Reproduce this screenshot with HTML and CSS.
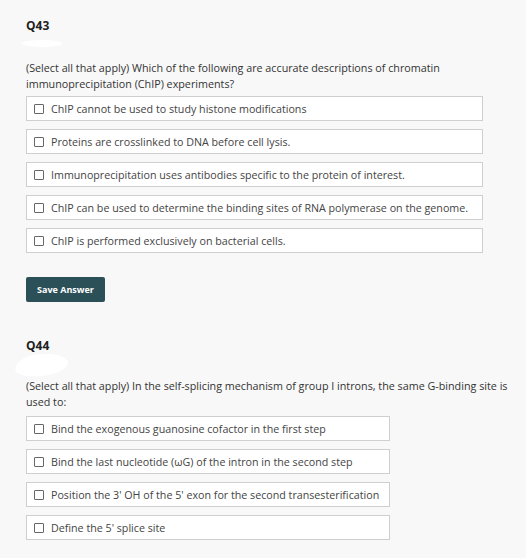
FILE: index.html
```html
<!DOCTYPE html>
<html>
<head>
<meta charset="utf-8">
<link rel="stylesheet" href="styles.css">
</head>
<body>
<div class="page">
  <section class="question q1">
    <h2 class="qnum">Q43</h2>
    <div class="blob blob-a"></div>
    <p class="prompt">(Select all that apply) Which of the following are accurate descriptions of chromatin immunoprecipitation (ChIP) experiments?</p>
    <div class="options wide">
      <label class="option"><span class="box"></span><span>ChIP cannot be used to study histone modifications</span></label>
      <label class="option"><span class="box"></span><span>Proteins are crosslinked to DNA before cell lysis.</span></label>
      <label class="option"><span class="box"></span><span>Immunoprecipitation uses antibodies specific to the protein of interest.</span></label>
      <label class="option"><span class="box"></span><span>ChIP can be used to determine the binding sites of RNA polymerase on the genome.</span></label>
      <label class="option"><span class="box"></span><span>ChIP is performed exclusively on bacterial cells.</span></label>
    </div>
    <button class="save">Save Answer</button>
  </section>
  <section class="question q2">
    <h2 class="qnum">Q44</h2>
    <div class="blob blob-b"></div>
    <p class="prompt">(Select all that apply) In the self-splicing mechanism of group I introns, the same G-binding site is used to:</p>
    <div class="options narrow">
      <label class="option"><span class="box"></span><span>Bind the exogenous guanosine cofactor in the first step</span></label>
      <label class="option"><span class="box"></span><span>Bind the last nucleotide (ωG) of the intron in the second step</span></label>
      <label class="option"><span class="box"></span><span>Position the 3' OH of the 5' exon for the second transesterification</span></label>
      <label class="option"><span class="box"></span><span>Define the 5' splice site</span></label>
    </div>
  </section>
</div>
</body>
</html>
```
FILE: styles.css
```css
html, body {
  margin: 0;
  padding: 0;
  background: #f8f8f8;
}
body {
  font-family: "Open Sans", "Noto Sans", sans-serif;
  color: #333;
  width: 526px;
  height: 558px;
  overflow: hidden;
}
.page {
  padding: 18px 0 0 26px;
}
.qnum {
  margin: 0;
  font-size: 12px;
  line-height: 16px;
  font-weight: 700;
  color: #222;
}
.blob {
  background: #ffffff;
  border-radius: 50%;
}
.blob-a {
  width: 40px;
  height: 7px;
  margin: 6px 0 0 -4px;
}
.blob-b {
  width: 53px;
  height: 22px;
  margin: 0 0 0 -11px;
  border-radius: 45% 55% 50% 50% / 60% 50% 50% 40%;
  transform: rotate(-6deg);
}
.prompt {
  margin: 13px 0 0 0;
  font-size: 10.75px;
  line-height: 16px;
  color: #333;
  width: 490px;
}
.q1 .prompt {
  width: 450px;
}
.q2 .prompt {
  margin-top: 2px;
}
.options {
  display: flex;
  flex-direction: column;
  gap: 8px;
  margin-top: 4px;
}
.q2 .options {
  margin-top: 6px;
}
.options.wide .option { width: 457px; }
.options.narrow .option { width: 364px; }
.option {
  box-sizing: border-box;
  height: 25px;
  display: flex;
  align-items: center;
  gap: 7px;
  padding-left: 7px;
  background: #fff;
  border: 1px solid #cfcfcf;
  font-size: 10.7px;
  color: #444;
  white-space: nowrap;
}
.box {
  box-sizing: border-box;
  width: 10px;
  height: 10px;
  border: 1px solid #666;
  border-radius: 1px;
  background: #fff;
  flex: none;
}
.save {
  display: block;
  margin-top: 24px;
  width: 79px;
  height: 25px;
  border: none;
  border-radius: 2px;
  background: #2b5058;
  color: #fff;
  font-family: "Open Sans", "Noto Sans", sans-serif;
  font-weight: 700;
  font-size: 9px;
  padding: 0;
}
.q2 {
  margin-top: 36px;
}
```
